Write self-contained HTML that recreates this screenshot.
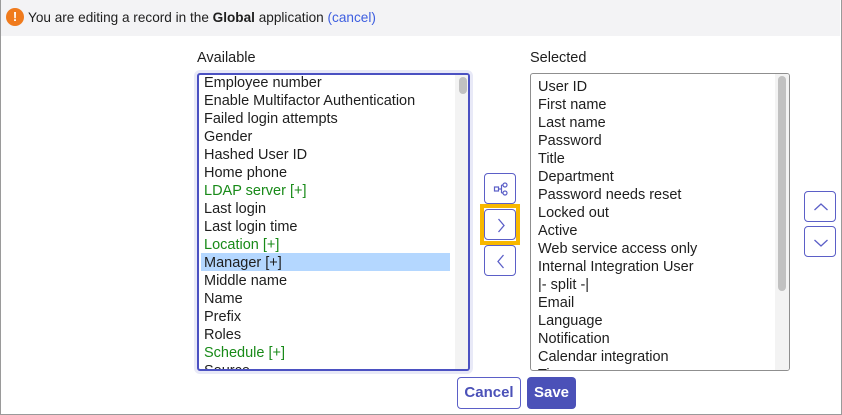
<!DOCTYPE html>
<html><head><style>
*{box-sizing:border-box;margin:0;padding:0}
body{width:842px;height:415px;background:#fff;font-family:"Liberation Sans",sans-serif;position:relative;overflow:hidden;color:#1e1e1e}
.frame{position:absolute;left:0;top:0;width:842px;height:415px;border:1px solid #9a9a9a;border-top:none}
.banner{position:absolute;left:1px;top:0;width:839px;height:36px;background:#f3f3f5;font-size:13.6px;line-height:36px;padding-left:27px}
.banner .ic{position:absolute;left:5px;top:8px;width:18px;height:18px;border-radius:50%;background:#f07b1d;color:#fff;font-weight:bold;font-size:13px;line-height:18px;text-align:center}
.banner a{color:#3d5ee0}
.lbl{position:absolute;font-size:14.5px}
.ring{position:absolute;left:194px;top:70px;width:279px;height:304px;border-radius:6px;background:#e8e9f7}
.box{position:absolute;overflow:hidden;background:#fff}
.av{left:197px;top:73px;width:273px;height:298px;border:2px solid #4b51c2;border-radius:3px}
.se{left:530px;top:73px;width:260px;height:298px;border:1px solid #8f8f8f;border-radius:3px}
.item{position:absolute;left:5px;font-size:14.5px;height:18px;line-height:18px;white-space:nowrap}
.se .item{left:7px}
.g{color:#188a18}
.hl{position:absolute;left:2px;top:178px;width:249px;height:18px;background:#b4d7ff}
.sb{position:absolute;background:#f3f3f3}
.th{position:absolute;background:#c1c1c1;border-radius:4px}
.btn{position:absolute;width:32px;height:31px;border:1px solid #5b5fc7;border-radius:4px;background:#fff}
.btn svg{position:absolute;left:0;top:0}
.yel{position:absolute;left:480px;top:204px;width:40px;height:41px;border:4px solid #f8b800}
.b2{position:absolute;top:377px;height:32px;border-radius:4px;font-weight:bold;font-size:15px;line-height:30px;text-align:center}
</style></head><body>
<div class="frame"></div>
<div class="banner"><span class="ic">!</span>You are editing a record in the <b>Global</b> application <a>(cancel)</a></div>
<div class="lbl" style="left:197px;top:50px">Available</div>
<div class="lbl" style="left:530px;top:50px">Selected</div>
<div class="ring"></div>
<div class="box av">
<div class="hl"></div>
<div class="item" style="top:-1px">Employee number</div>
<div class="item" style="top:17px">Enable Multifactor Authentication</div>
<div class="item" style="top:35px">Failed login attempts</div>
<div class="item" style="top:53px">Gender</div>
<div class="item" style="top:71px">Hashed User ID</div>
<div class="item" style="top:89px">Home phone</div>
<div class="item g" style="top:107px">LDAP server [+]</div>
<div class="item" style="top:125px">Last login</div>
<div class="item" style="top:143px">Last login time</div>
<div class="item g" style="top:161px">Location [+]</div>
<div class="item" style="top:179px">Manager [+]</div>
<div class="item" style="top:197px">Middle name</div>
<div class="item" style="top:215px">Name</div>
<div class="item" style="top:233px">Prefix</div>
<div class="item" style="top:251px">Roles</div>
<div class="item g" style="top:269px">Schedule [+]</div>
<div class="item" style="top:287px">Source</div>
<div class="sb" style="left:256px;top:0;width:15px;height:296px"></div>
<div class="th" style="left:260px;top:2px;width:8px;height:17px"></div>
</div>
<div class="box se">
<div class="item" style="top:4px">User ID</div>
<div class="item" style="top:22px">First name</div>
<div class="item" style="top:40px">Last name</div>
<div class="item" style="top:58px">Password</div>
<div class="item" style="top:76px">Title</div>
<div class="item" style="top:94px">Department</div>
<div class="item" style="top:112px">Password needs reset</div>
<div class="item" style="top:130px">Locked out</div>
<div class="item" style="top:148px">Active</div>
<div class="item" style="top:166px">Web service access only</div>
<div class="item" style="top:184px">Internal Integration User</div>
<div class="item" style="top:202px">|- split -|</div>
<div class="item" style="top:220px">Email</div>
<div class="item" style="top:238px">Language</div>
<div class="item" style="top:256px">Notification</div>
<div class="item" style="top:274px">Calendar integration</div>
<div class="item" style="top:292px">Time zone</div>
<div class="sb" style="left:244px;top:0;width:14px;height:296px"></div>
<div class="th" style="left:247px;top:2px;width:8px;height:215px"></div>
</div>
<div class="btn" style="left:484px;top:173px"><svg width="32" height="31" fill="none" stroke="#5b5fc7" stroke-width="1.2"><rect x="9.5" y="13" width="4" height="4"/><circle cx="20" cy="11" r="2"/><circle cx="20" cy="19" r="2"/><path d="M13.5 15h3M16.5 11v8M16.5 11h1.5M16.5 19h1.5"/></svg></div>
<div class="yel"></div>
<div class="btn" style="left:484px;top:209px"><svg width="32" height="31" fill="none" stroke="#5b5fc7" stroke-width="1.3"><path d="M13.5 9l5.5 6.5-5.5 6.5"/></svg></div>
<div class="btn" style="left:484px;top:245px"><svg width="32" height="31" fill="none" stroke="#5b5fc7" stroke-width="1.3"><path d="M18.5 9l-5.5 6.5 5.5 6.5"/></svg></div>
<div class="btn" style="left:804px;top:191px"><svg width="32" height="31" fill="none" stroke="#5b5fc7" stroke-width="1.3"><path d="M9.5 18l6.5-6 6.5 6"/></svg></div>
<div class="btn" style="left:804px;top:226px"><svg width="32" height="31" fill="none" stroke="#5b5fc7" stroke-width="1.3"><path d="M9.5 13l6.5 6 6.5-6"/></svg></div>
<div class="b2" style="left:457px;width:64px;border:1px solid #5b5fc7;color:#4b51b8;background:#fff">Cancel</div>
<div class="b2" style="left:527px;width:49px;background:#4b51b8;color:#fff;line-height:32px">Save</div>
</body></html>
